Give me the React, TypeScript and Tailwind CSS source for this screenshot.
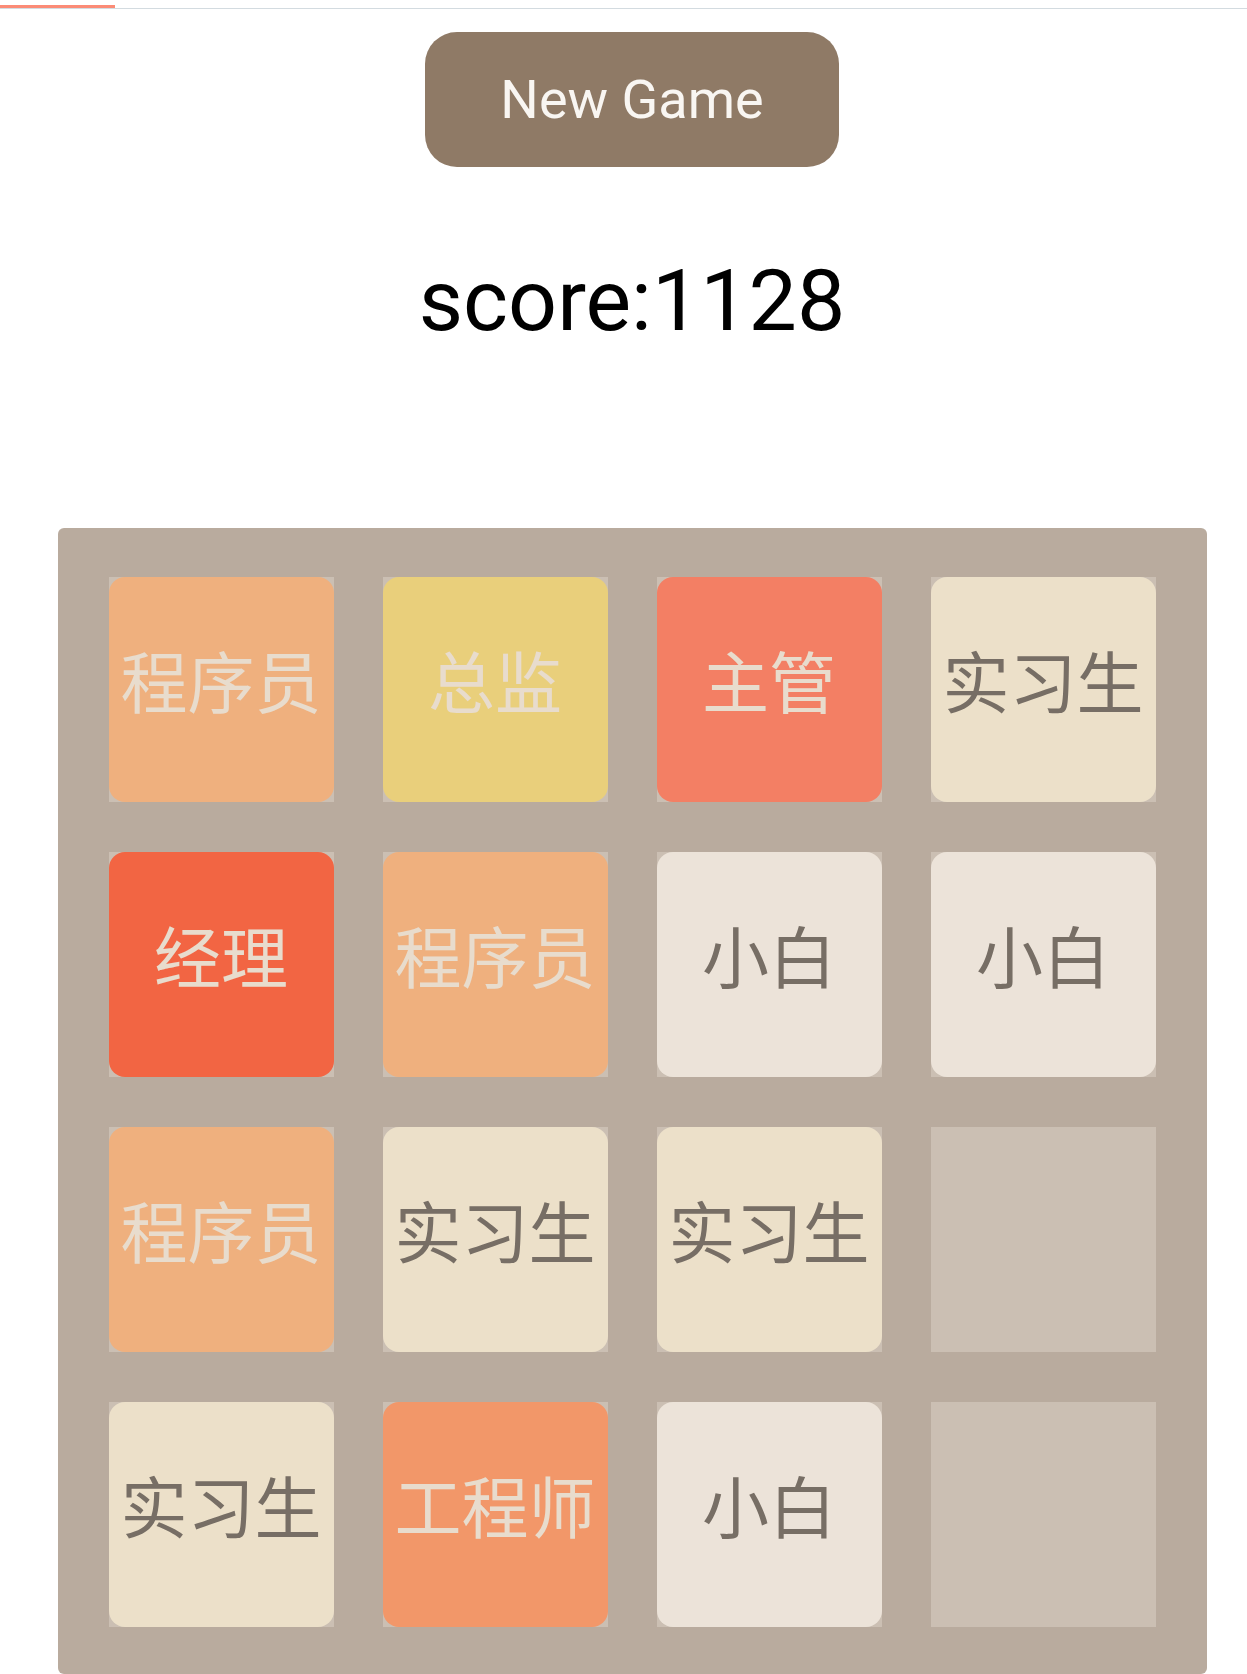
type Tile = { label: string; bg: string; fg: string } | null;

const LIGHT = "text-[#e8dccd]";
const DARK = "text-[#776e65]";

const rank = {
  xiaobai: { label: "小白", bg: "bg-[#ece3d9]", fg: DARK },
  intern: { label: "实习生", bg: "bg-[#ece0c9]", fg: DARK },
  engineer: { label: "工程师", bg: "bg-[#f29769]", fg: LIGHT },
  coder: { label: "程序员", bg: "bg-[#efb07e]", fg: LIGHT },
  lead: { label: "主管", bg: "bg-[#f37f64]", fg: LIGHT },
  manager: { label: "经理", bg: "bg-[#f26543]", fg: LIGHT },
  director: { label: "总监", bg: "bg-[#e9cf7b]", fg: LIGHT },
};

const board: Tile[] = [
  rank.coder, rank.director, rank.lead, rank.intern,
  rank.manager, rank.coder, rank.xiaobai, rank.xiaobai,
  rank.coder, rank.intern, rank.intern, null,
  rank.intern, rank.engineer, rank.xiaobai, null,
];

function Cell({ tile }: { tile: Tile }) {
  return (
    <div className="h-[225px] bg-[#cbbfb3]">
      {tile && (
        <div
          className={`flex h-full w-full items-center justify-center rounded-[16px] pb-[22px] text-[67px] leading-none ${tile.bg} ${tile.fg}`}
          style={{ fontFamily: '"Noto Sans CJK SC", "Noto Sans", sans-serif' }}
        >
          {tile.label}
        </div>
      )}
    </div>
  );
}

export default function App() {
  return (
    <div className="min-h-screen bg-white" style={{ fontFamily: "Roboto, sans-serif" }}>
      {/* loading strip */}
      <div className="pt-[5px]">
        <div className="h-[3px] w-[115px] bg-[#fb8b76]" />
        <div className="h-px w-full bg-[#d3dbe0]" />
      </div>

      <div className="flex flex-col items-center pl-[17px]">
        <button className="mt-[23px] flex h-[135px] w-[414px] items-center justify-center rounded-[32px] bg-[#8f7a66] text-[54px] leading-none text-[#f9f6f2]">
          New Game
        </button>

        <div className="mt-[91px] text-[86px] leading-none text-black">
          score:1128
        </div>

        <div className="mt-[184px] grid w-[1149px] grid-cols-4 gap-x-[49px] gap-y-[50px] rounded-[6px] bg-[#b9ab9e] pb-[47px] pl-[51px] pr-[51px] pt-[49px]">
          {board.map((tile, i) => (
            <Cell key={i} tile={tile} />
          ))}
        </div>
      </div>
    </div>
  );
}
